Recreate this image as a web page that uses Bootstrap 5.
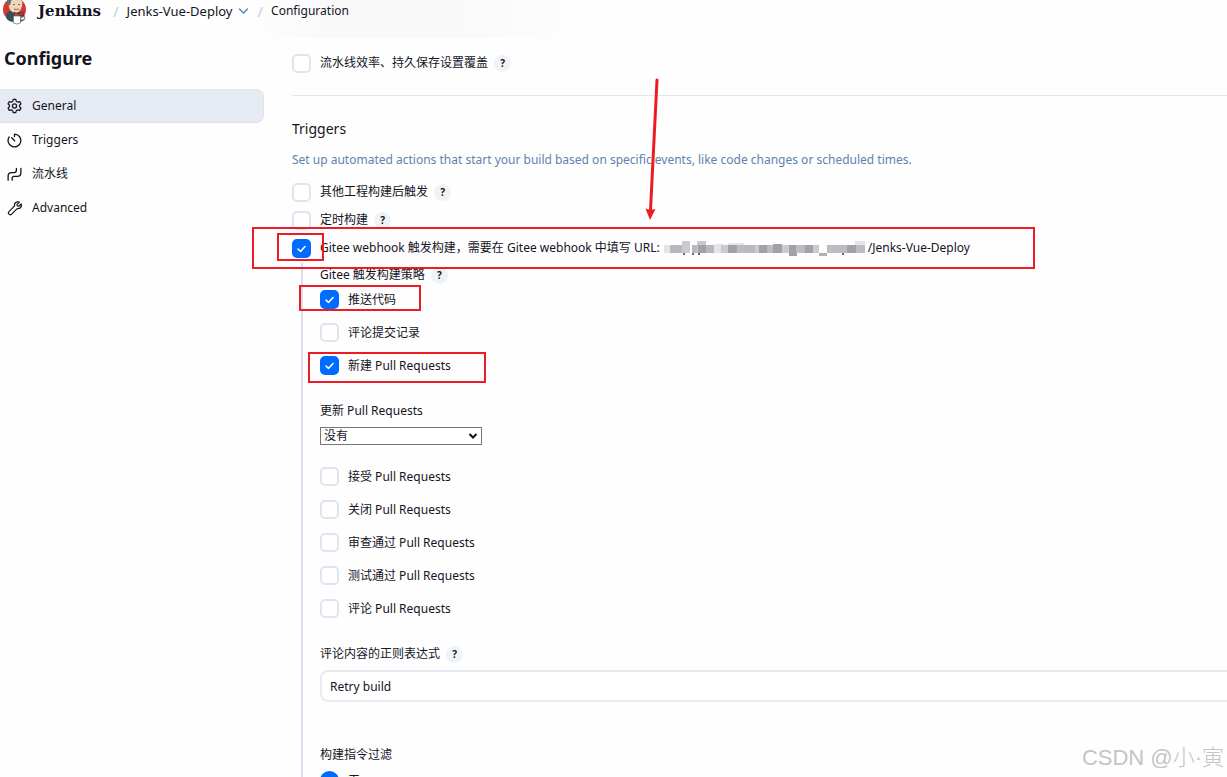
<!DOCTYPE html>
<html lang="zh-CN">
<head>
<meta charset="utf-8">
<meta name="viewport" content="width=device-width, initial-scale=1">
<title>Jenks-Vue-Deploy Configuration</title>
<link href="https://cdn.jsdelivr.net/npm/bootstrap@5.3.0/dist/css/bootstrap.min.css" rel="stylesheet">
<style>
:root { --ink: #14141f; --line: #dfe4ef; --accent: #006bff; --note: #ed1c24; }
body { font-family: "Noto Sans", "Noto Sans CJK SC", sans-serif; font-size: 12px; line-height: 18px; color: var(--ink); background: #fefefe; }
.app-shell { height: 100vh; overflow: hidden; position: relative; }
.topbar { height: 38px; padding: 0 0 16px 2px; }
.topbar a { color: var(--ink); text-decoration: none; }
.topbar::before { content: ""; position: absolute; left: 20%; width: 28%; top: 0; height: 38px; background: linear-gradient(90deg, transparent, #f8f8f8 30%, #f9f9f9 60%, transparent); z-index: -1; }
.brand-link { gap: 11px; }
.brand-name { font: bold 15px/22px "DejaVu Serif", serif; }
.crumb-link { font-size: 13px; }
.slash { color: #c5cbdc; font-size: 15px; }
.side-panel { width: 264px; flex: none; }
.side-title { font-size: 18px; line-height: 24px; font-weight: 700; margin: 8px 0 19px 4px; }
.side-link { height: 34px; padding: 0 7px; gap: 10px; color: var(--ink); text-decoration: none; }
.side-link.active { background: #e6eaf2; border-radius: 0 8px 8px 0; border: 1px solid #dee3ec; border-left: 0; }
.content-panel { padding: 11px 0 0 28px; min-width: 0; }
.opt-row { position: relative; display: flex; align-items: center; height: 28px; }
.opt-row label, .field-label { margin: 0; white-space: nowrap; }
.opt-row .form-check-input { width: 19px; height: 19px; margin: 0 9px 0 0; flex: none; border: 2px solid var(--line); border-radius: 5px; background-color: #fff; box-shadow: none; }
.opt-row .form-check-input:checked { background-color: var(--accent); border-color: var(--accent); background-size: 15px 15px; background-image: url("data:image/svg+xml,%3Csvg xmlns='http://www.w3.org/2000/svg' viewBox='0 0 15 15'%3E%3Cpath d='M4 8l2.5 2.5L11 5.5' fill='none' stroke='%23fff' stroke-width='1.6' stroke-linecap='round' stroke-linejoin='round'/%3E%3C/svg%3E"); }
.opt-row .form-check-input[type=radio] { border-radius: 50%; background-image: url("data:image/svg+xml,%3Csvg xmlns='http://www.w3.org/2000/svg' viewBox='0 0 15 15'%3E%3Ccircle cx='7.5' cy='7.5' r='3.5' fill='%23fff'/%3E%3C/svg%3E"); }
.help-btn { width: 17px; height: 17px; margin-left: 6px; padding: 0; border: 0; border-radius: 50%; background: #eff3f6; color: var(--ink); font-size: 10px; line-height: 17px; font-weight: 700; flex: none; }
.section-rule { height: 1px; margin: 18px 0 24px; background: #e3e5ec; }
.section-title { font-size: 14px; line-height: 18px; font-weight: 400; margin: 0 0 12px; }
.section-note { color: #6181ae; line-height: 20px; margin: 0 0 8px; }
.strategy { margin: 1px 0 0 9px; padding-left: 17px; border-left: 2px solid #d9dfec; }
.strategy .opt-row { height: 33px; }
.field-label { display: flex; align-items: center; height: 18px; }
.field-label.spaced { margin-top: 20px; }
.field-label.group-head { height: 20px; padding-top: 4px; }
.plain-select { display: block; width: 162px; height: 18px; margin: 7px 0 15px; padding: 0 20px 0 3px; border: 1px solid #767676; border-radius: 0; line-height: 16px; color: var(--ink); appearance: none; background: #fff url("data:image/svg+xml,%3Csvg xmlns='http://www.w3.org/2000/svg' viewBox='0 0 10 8'%3E%3Cpath d='M1.5 2l3.5 3.5L8.5 2' fill='none' stroke='%23111' stroke-width='2'/%3E%3C/svg%3E") no-repeat right 3px center / 10px 8px; }
.regex-input { height: 32px; margin: 7px 0 44px; padding: 0 8px; font-size: 12px; color: var(--ink); border: 2px solid #e6eaf2; border-right: 0; border-radius: 8px 0 0 8px; background: #fff; }
.note-box { position: absolute; border: 2px solid var(--note); pointer-events: none; z-index: 2; }
.note-wide { left: -40px; top: -7px; width: 783px; height: 42px; }
.note-check { left: -15px; top: -1px; width: 47px; height: 28px; }
.note-push { left: -21px; top: 2px; width: 122px; height: 26px; }
.note-new { left: -12px; top: 3px; width: 178px; height: 31px; }
.note-arrow { position: absolute; left: 352px; top: -156px; z-index: 2; pointer-events: none; }
.masked { width: 206px; height: 18px; flex: none; margin-left: 2px; }
.watermark { position: absolute; right: 3px; bottom: 3px; font: 300 22px/32px "Liberation Sans", "Noto Sans CJK SC", sans-serif; color: #c4c4c8; text-shadow: 1px 1px 0 #fff; }
</style>
</head>
<body>
<div class="app-shell">
  <header class="topbar d-flex align-items-center">
    <a href="#" class="brand-link d-flex align-items-center">
      <svg width="25" height="30" viewBox="0 0 25 30" aria-hidden="true">
        <circle cx="12.500" cy="13.500" r="11.500" fill="#d33833"/>
        <path d="M4 21c0-4 2-6 5-6l8 1c4 0 6 3 6 7-2 3-6 3-10 3s-8-1-9-5z" fill="#335061"/>
        <path d="M6 3c3-5 12-5 14 1 1 6-1 12-6 13C9 17 6 13 6 3z" fill="#f0d6b7"/>
        <path d="M5 8C4 2 8-2 13-1c4 0 7 3 7 6-2-2-4-2-7-2-2 0-3 1-4 2 0 2-1 4-2 5z" fill="#6d6b6d"/>
        <path d="M11 8.500h2M16 8.500h2M12 13q2 1 5 0" fill="none" stroke="#7b5a49" stroke-width=".9"/>
        <path d="M12 16l5 2 4-2v4l-4-1-4 2z" fill="#d33833" stroke="#48201f" stroke-width=".5"/>
        <path d="M11.500 20h7v7q-3.500 2-7 0z" fill="#fff" stroke="#777" stroke-width=".8"/>
        <path d="M19 21.500q4-2 4 .5t-4 2" fill="#eee" stroke="#666" stroke-width=".8"/>
      </svg>
      <span class="brand-name">Jenkins</span>
    </a>
    <span class="slash ms-2 ps-1">/</span>
    <a href="#" class="crumb-link ms-2">Jenks-Vue-Deploy</a>
    <svg class="ms-1 me-2" width="13" height="8" viewBox="0 0 11 8" aria-hidden="true"><path d="M1.500 2l4 4 4-4" fill="none" stroke="#5a83b8" stroke-width="1.500" stroke-linecap="round" stroke-linejoin="round"/></svg>
    <span class="slash">/</span>
    <span class="ms-2">Configuration</span>
  </header>

  <div class="d-flex">
    <nav class="side-panel" aria-label="Configure">
      <h1 class="side-title">Configure</h1>
      <a href="#" class="side-link active d-flex align-items-center">
        <svg width="15" height="16" viewBox="0 0 16 16" fill="none" stroke="#14141f" stroke-width="1.300" stroke-linejoin="round"><path d="M6.600 1h2.800l.5 2 1.600.9 2-.6 1.400 2.400L13.400 7.200v1.600l1.500 1.500-1.400 2.400-2-.6-1.600.9-.5 2H6.600l-.5-2-1.600-.9-2 .6L1.100 10.300l1.500-1.500V7.200L1.100 5.700l1.400-2.400 2 .6L6.100 3z"/><circle cx="8" cy="8" r="2.200"/></svg>
        General</a>
      <a href="#" class="side-link d-flex align-items-center">
        <svg width="15" height="15" viewBox="0 0 16 16" fill="none" stroke="#14141f" stroke-width="1.400" stroke-linecap="round"><path d="M8 1.200a6.800 6.800 0 1 1-5.700 3M8 1.200v2.600M5 5l3.200 3.200"/></svg>
        Triggers</a>
      <a href="#" class="side-link d-flex align-items-center">
        <svg width="15" height="15" viewBox="0 0 16 16" fill="none" stroke="#14141f" stroke-width="1.400" stroke-linecap="round"><path d="M1.200 14V9.500Q1.200 6 4.700 6H7.500Q10 6 10 3.500V1.500M5.500 14V12Q5.500 10 7.500 10H11Q14.800 10 14.800 6.200V1.500"/></svg>
        流水线</a>
      <a href="#" class="side-link d-flex align-items-center">
        <svg width="15" height="16" viewBox="0 0 16 16" fill="none" stroke="#14141f" stroke-width="1.300" stroke-linejoin="round"><path d="M13.200 1.700L10.700 4.200l.3 1.600 1.600.3 2.500-2.500c1 3-1.300 5.600-4.200 5l-6 6c-1.800 1.700-4.600-.8-2.800-2.800l6-6c-.7-3 2-5.300 5.100-4.100z"/></svg>
        Advanced</a>
    </nav>

    <main class="content-panel flex-grow-1">
      <div class="opt-row"><input class="form-check-input" type="checkbox" id="c0"><label for="c0">流水线效率、持久保存设置覆盖</label><button type="button" class="help-btn">?</button></div>
      <div class="section-rule"></div>
      <h2 class="section-title">Triggers</h2>
      <p class="section-note">Set up automated actions that start your build based on specific events, like code changes or scheduled times.</p>
      <div class="opt-row"><input class="form-check-input" type="checkbox" id="c1"><label for="c1">其他工程构建后触发</label><button type="button" class="help-btn">?</button></div>
      <div class="opt-row"><input class="form-check-input" type="checkbox" id="c2"><label for="c2">定时构建</label><button type="button" class="help-btn">?</button></div>
      <div class="opt-row">
        <input class="form-check-input" type="checkbox" id="c3" checked>
        <label for="c3" class="d-flex">Gitee webhook 触发构建，需要在 Gitee webhook 中填写 URL:
          <svg class="masked" viewBox="0 0 206 18" preserveAspectRatio="none" shape-rendering="crispEdges" role="img" aria-label="hidden address">
            <path d="M2 6h6v8H2zM52 5h9v9h-9zM66 4h16v10H66zM193 2h10v12h-10z" fill="#e5e5e7"/>
            <path d="M8 6h14v8H8zM30 6h9v8h-9zM43 6h9v8h-9zM81 6h30v8H81z" fill="#b8b8bd"/>
            <path d="M20 2h8v12h-8zM35 2h9v12h-9zM59 6h8v8h-8zM93 6h9v8h-9zM118 6h16v8h-16zM150 6h17v8h-17z" fill="#cacacf"/>
            <path d="M36 6h8v8h-8zM66 6h9v8h-9zM97 6h9v8h-9zM111 5h9v9h-9zM127 6h8v11h-8zM142 6h9v8h-9zM185 6h9v8h-9z" fill="#a1a1a8"/>
            <path d="M105 6h6v8h-6zM134 6h9v8h-9zM165 6h20v8h-20zM194 6h9v8h-9zM75 6h8v8h-8z" fill="#bcbcc2"/>
            <path d="M157 6h8v8h-8z" fill="#fff"/><path d="M157 14h8v3h-8z" fill="#b0b0b5"/>
            <path d="M21 14h2v2h-2zM30 14h2v2h-2zM36 14h2v2h-2zM180 14h2v2h-2z" fill="#65656f"/>
          </svg>/Jenks-Vue-Deploy</label>
        <div class="note-box note-wide"></div>
        <div class="note-box note-check"></div>
        <svg class="note-arrow" width="20" height="144" viewBox="0 0 20 144" aria-hidden="true"><path d="M13 2L6.500 132" stroke="#ed1c24" stroke-width="3" stroke-linecap="round"/><path d="M1.500 130.500L6 142l5.500-11-5 1z" fill="#ed1c24"/></svg>
      </div>

      <div class="strategy">
        <div class="field-label group-head">Gitee 触发构建策略<button type="button" class="help-btn">?</button></div>
        <div class="opt-row"><input class="form-check-input" type="checkbox" id="s1" checked><label for="s1">推送代码</label><div class="note-box note-push"></div></div>
        <div class="opt-row"><input class="form-check-input" type="checkbox" id="s2"><label for="s2">评论提交记录</label></div>
        <div class="opt-row"><input class="form-check-input" type="checkbox" id="s3" checked><label for="s3">新建 Pull Requests</label><div class="note-box note-new"></div></div>
        <label class="field-label spaced" for="upd">更新 Pull Requests</label>
        <select class="plain-select" id="upd"><option>没有</option></select>
        <div class="opt-row"><input class="form-check-input" type="checkbox" id="s4"><label for="s4">接受 Pull Requests</label></div>
        <div class="opt-row"><input class="form-check-input" type="checkbox" id="s5"><label for="s5">关闭 Pull Requests</label></div>
        <div class="opt-row"><input class="form-check-input" type="checkbox" id="s6"><label for="s6">审查通过 Pull Requests</label></div>
        <div class="opt-row"><input class="form-check-input" type="checkbox" id="s7"><label for="s7">测试通过 Pull Requests</label></div>
        <div class="opt-row"><input class="form-check-input" type="checkbox" id="s8"><label for="s8">评论 Pull Requests</label></div>
        <div class="field-label spaced"><label for="rx">评论内容的正则表达式</label><button type="button" class="help-btn">?</button></div>
        <input class="form-control regex-input" type="text" id="rx" value="Retry build">
        <div class="field-label">构建指令过滤</div>
        <div class="opt-row"><input class="form-check-input" type="radio" name="filter" id="r1" checked><label for="r1">无</label></div>
      </div>
    </main>
  </div>
  <div class="watermark">CSDN @小·寅</div>
</div>
<script src="https://cdn.jsdelivr.net/npm/bootstrap@5.3.0/dist/js/bootstrap.bundle.min.js"></script>
</body>
</html>
